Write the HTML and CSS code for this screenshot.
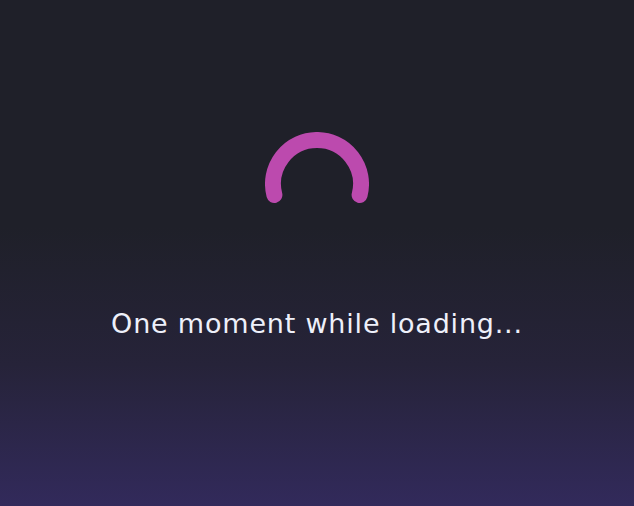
FILE: index.html
```html
<!DOCTYPE html>
<html lang="en">
<head>
<meta charset="utf-8">
<title>Loading</title>
<link rel="stylesheet" href="styles.css">
</head>
<body>
<main class="loader">
  <svg class="spinner" width="104" height="104" viewBox="0 0 104 104" aria-hidden="true">
    <path d="M 9.4 63 A 44 44 0 1 1 94.6 63" fill="none" stroke="#bc4aae" stroke-width="16" stroke-linecap="round"/>
  </svg>
  <p class="message">One moment while loading...</p>
</main>
</body>
</html>
```
FILE: styles.css
```css
html, body {
  margin: 0;
  padding: 0;
  height: 100%;
}
body {
  background: linear-gradient(180deg, #1f2029 0%, #1f2029 45%, #262339 72%, #322a5b 100%);
  font-family: "DejaVu Sans", "Open Sans", sans-serif;
}
.loader {
  height: 506px;
  display: flex;
  flex-direction: column;
  align-items: center;
  padding-top: 132px;
  box-sizing: border-box;
}
.spinner {
  display: block;
}
.message {
  margin: 70px 0 0;
  color: #eef0fa;
  font-size: 27px;
  line-height: 36px;
  font-weight: 400;
  letter-spacing: 0.8px;
}
```
